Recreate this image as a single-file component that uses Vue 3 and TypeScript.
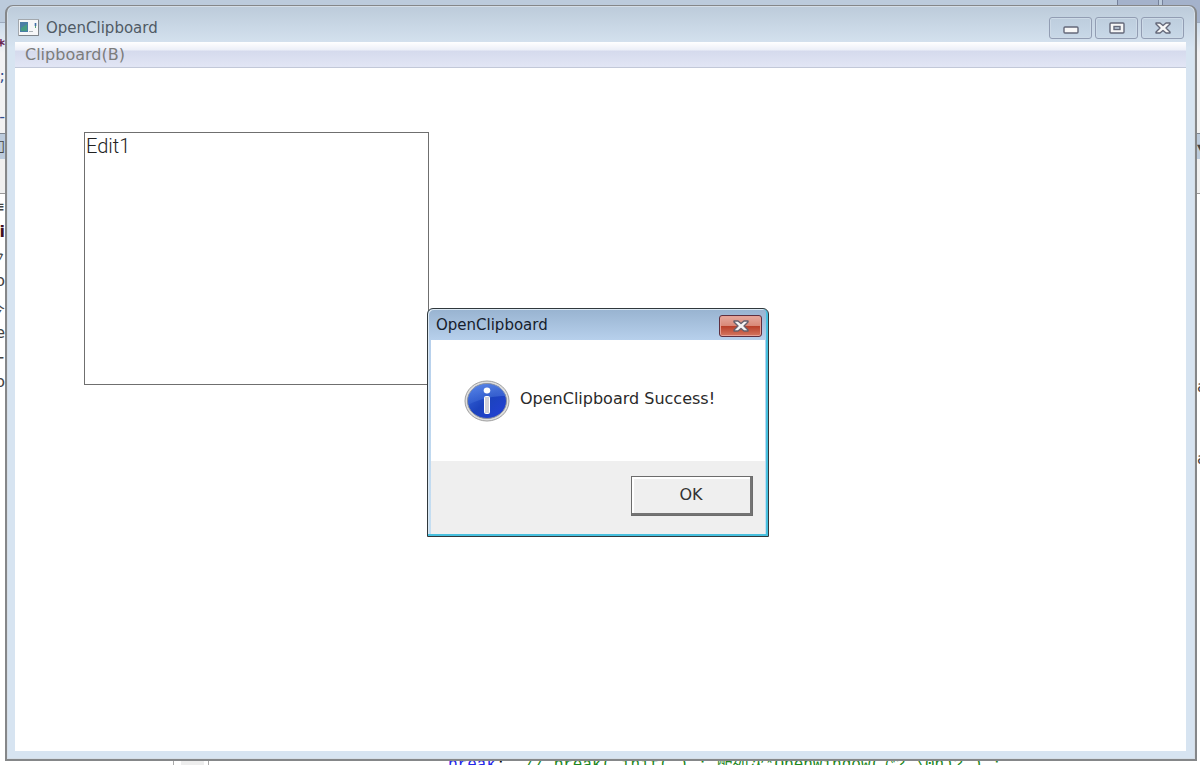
<script setup lang="ts">
import { ref } from 'vue'

interface Fragment {
  text: string
  top: number
  tone: string
}

const editText = ref('Edit1')
const dialogOpen = ref(true)

const leftFragments: Fragment[] = [
  { text: '*', top: 36, tone: 'plum' },
  { text: ';', top: 66, tone: 'navy' },
  { text: '-', top: 107, tone: 'navy' },
  { text: '□', top: 136, tone: 'ink' },
  { text: '≡', top: 197, tone: 'ink' },
  { text: 'i', top: 222, tone: 'maroon' },
  { text: 'フ', top: 249, tone: 'ink' },
  { text: 'o', top: 271, tone: 'ink' },
  { text: '今', top: 299, tone: 'ink' },
  { text: 'e', top: 323, tone: 'ink' },
  { text: '−', top: 348, tone: 'ink' },
  { text: 'o', top: 372, tone: 'ink' },
]

const rightFragments: Fragment[] = [
  { text: '▾', top: 138, tone: 'ink' },
  { text: 'a', top: 377, tone: 'ink' },
  { text: 'a', top: 449, tone: 'ink' },
]
</script>

<template>
  <div class="desktop">
    <div class="backdrop" aria-hidden="true">
      <div class="back-title"><span class="back-tab first"></span><span class="back-tab"></span></div>
      <div class="back-tools"></div>
      <div class="back-band"></div>
      <div class="back-head"></div>
      <div class="edge left">
        <span v-for="f in leftFragments" :key="f.top" :class="f.tone" :style="{ top: f.top + 'px' }">{{ f.text }}</span>
      </div>
      <div class="edge right">
        <span v-for="f in rightFragments" :key="f.top" :class="f.tone" :style="{ top: f.top + 'px' }">{{ f.text }}</span>
      </div>
      <div class="code-row">
        <span class="gutter"></span>
        <code><b>break</b>;&nbsp; <i>// break( init( ) ; 配列次*OpenWindow(で? \0n)? ) ;</i></code>
      </div>
    </div>

    <main class="window">
      <header class="titlebar">
        <svg class="app-icon" width="21" height="17" viewBox="0 0 21 17">
          <rect x="0.5" y="0.5" width="20" height="16" fill="#f6f7f8" stroke="#a3a8ad" />
          <path d="M1 16.5H20.5V1" fill="none" stroke="#7e848a" />
          <rect x="2" y="3" width="8" height="10" fill="#4a7ea6" />
          <path d="M3 9L9 5V12H3Z" fill="#459b82" />
          <rect x="11" y="12" width="4" height="1" fill="#a9b0b5" />
          <path d="M17.5 4V7" stroke="#3f6da5" stroke-width="1.6" />
          <path d="M17.5 7V9" stroke="#56a878" />
        </svg>
        <h1>OpenClipboard</h1>
        <div class="controls">
          <button type="button" aria-label="Minimize">
            <svg width="16" height="12" viewBox="0 0 16 12"><rect x="1" y="5" width="14" height="6" rx="1" fill="#f7f7f7" stroke="#646879" stroke-width="1.4" /></svg>
          </button>
          <button type="button" aria-label="Maximize">
            <svg width="16" height="12" viewBox="0 0 16 12"><rect x="1" y="1" width="14" height="10" rx="1" fill="#f7f7f7" stroke="#646879" stroke-width="1.4" /><rect x="5" y="4.5" width="6" height="3" fill="#b9c8da" stroke="#646879" stroke-width="1.4" /></svg>
          </button>
          <button type="button" aria-label="Close">
            <svg width="16" height="12" viewBox="0 0 16 12"><path d="M1 1H5L8 3.5L11 1H15V2L11 6L15 10V11H11L8 8.5L5 11H1V10L5 6L1 2Z" fill="#f7f7f7" stroke="#646879" stroke-width="1.4" stroke-linejoin="round" /></svg>
          </button>
        </div>
      </header>
      <nav class="menubar"><button type="button">Clipboard(B)</button></nav>
      <section class="client">
        <textarea v-model="editText" aria-label="Edit1" spellcheck="false"></textarea>
      </section>
    </main>

    <div v-if="dialogOpen" class="dialog" role="dialog" aria-labelledby="dialog-title">
      <header class="dialog-title">
        <h2 id="dialog-title">OpenClipboard</h2>
        <button type="button" class="dialog-close" aria-label="Close dialog" @click="dialogOpen = false">
          <svg width="16" height="12" viewBox="0 0 16 12"><path d="M1 1H5L8 3.5L11 1H15V2L11 6L15 10V11H11L8 8.5L5 11H1V10L5 6L1 2Z" fill="#f5f5f5" stroke="#65606c" stroke-width="1.4" stroke-linejoin="round" /></svg>
        </button>
      </header>
      <div class="message">
        <svg width="46" height="42" viewBox="0 0 46 42">
          <defs>
            <linearGradient id="info-blue" x1="0" y1="0" x2="1" y2="1">
              <stop offset="0" stop-color="#3d6ee0" />
              <stop offset="0.5" stop-color="#1c43bd" />
              <stop offset="1" stop-color="#2440d8" />
            </linearGradient>
            <linearGradient id="info-shine" x1="0" y1="0" x2="0" y2="1">
              <stop offset="0" stop-color="#6f9af0" stop-opacity="0.6" />
              <stop offset="1" stop-color="#4674dc" stop-opacity="0.3" />
            </linearGradient>
          </defs>
          <ellipse cx="23" cy="21" rx="22" ry="20" fill="#dedede" stroke="#a0a0a0" />
          <ellipse cx="23" cy="21" rx="19.5" ry="17.5" fill="url(#info-blue)" stroke="#8e939e" />
          <path d="M4 23C3 11 12 4 23 4C33 4 40 9 42 16C30 16 17 18 4 25Z" fill="url(#info-shine)" />
          <ellipse cx="23" cy="10.5" rx="3.3" ry="3" fill="#fff" />
          <rect x="20.5" y="16.5" width="5" height="17" rx="1" fill="#d2d2d8" stroke="#fff" />
        </svg>
        <p>OpenClipboard Success!</p>
      </div>
      <footer class="actions"><button type="button" class="ok" @click="dialogOpen = false">OK</button></footer>
    </div>
  </div>
</template>

<style>
html,
body {
  margin: 0;
  overflow: hidden;
}
</style>

<style scoped>
.desktop {
  position: relative;
  box-sizing: border-box;
  height: 100vh;
  padding: 5px 3px 4px 5px;
  background: #fff;
  font-family: "DejaVu Sans", Verdana, sans-serif;
  overflow: hidden;
}

h1,
h2,
p {
  margin: 0;
  font-weight: 400;
}

button {
  margin: 0;
  padding: 0;
  font-family: inherit;
}

svg {
  display: block;
}

.backdrop {
  position: absolute;
  inset: 0;
  overflow: hidden;
}

.back-title {
  display: flex;
  justify-content: flex-end;
  gap: 3px;
  height: 22px;
  background: #bccbdc;
  border-bottom: 1px solid #9daabd;
}

.back-tab {
  width: 37px;
  height: 22px;
  background: #a4b2cb;
  border-left: 1px solid #75819a;
}

.back-tab.first {
  width: 40px;
  border-right: 1px solid #75819a;
}

.back-tools {
  height: 110px;
  background: linear-gradient(#ccdcec 0, #f2f2f4 30px, #f2f2f2 100%);
}

.back-band {
  height: 26px;
  background: #bccbdc;
  border-top: 1px solid #7f8791;
  box-sizing: border-box;
}

.back-head {
  height: 34px;
  background: #f0f0f0;
  border-bottom: 1px solid #999;
}

.edge {
  position: absolute;
  top: 0;
  bottom: 0;
  width: 5px;
  overflow: hidden;
  font-size: 16px;
  line-height: 20px;
}

.edge.left {
  left: 0;
}

.edge.right {
  right: 0;
  width: 3px;
}

.edge span {
  position: absolute;
}

.edge.left span {
  right: 0;
}

.edge.right span {
  left: 0;
}

.ink {
  color: #444;
}

.navy {
  color: #34508f;
}

.plum {
  color: #6b2551;
  font-weight: 700;
}

.maroon {
  color: #401020;
  font-weight: 700;
}

.code-row {
  position: absolute;
  inset: auto 0 0 0;
  display: flex;
  height: 4px;
  overflow: hidden;
  padding-left: 173px;
}

.gutter {
  box-sizing: border-box;
  width: 36px;
  margin-right: 239px;
  background: linear-gradient(90deg, #fff 7px, #eee 7px 30px, #fff 30px);
  border: solid #aaa;
  border-width: 0 1px;
}

code {
  margin-top: -6px;
  font-family: "Liberation Mono", "Noto Sans CJK JP", monospace;
  font-size: 16px;
  line-height: 20px;
  white-space: nowrap;
}

code b {
  color: #2525e8;
  font-weight: 400;
}

code i {
  color: #218721;
  font-style: normal;
}

.window {
  position: relative;
  display: flex;
  flex-direction: column;
  box-sizing: border-box;
  height: 100%;
  padding: 0 9px 8px 8px;
  background: linear-gradient(#bccbda 0, #d7e4f1 42px, #d7e4f1 100%);
  border: 2px solid #858789;
  border-top-width: 1px;
  border-radius: 8px 8px 0 0;
  box-shadow: inset 0 0 0 1px #d5dee7;
}

.titlebar {
  display: flex;
  align-items: center;
  height: 36px;
  padding: 0 2px 0 3px;
}

.titlebar h1 {
  flex: 1;
  margin: 8px 0 0 7px;
  color: #505a64;
  font-size: 15px;
  line-height: 20px;
}

.app-icon {
  margin-top: 6px;
}

.controls {
  display: flex;
  gap: 3px;
  margin-top: 8px;
}

.controls button {
  display: grid;
  place-items: center;
  width: 43px;
  height: 22px;
  background: linear-gradient(#bdcddd, #c8d8e7);
  border: 1px solid #929db3;
  border-radius: 3px;
  box-shadow: inset 0 0 0 1px #cddae7;
}

.menubar {
  box-sizing: border-box;
  height: 26px;
  padding-left: 10px;
  background: linear-gradient(#fff 0, #eceff8 8px, #d5daed 9px, #e1e5f4 24px);
  border-bottom: 1px solid #c2c8d8;
}

.menubar button {
  background: none;
  border: 0;
  color: #7c7c7c;
  font-size: 16px;
  line-height: 25px;
}

.client {
  flex: 1;
  padding: 64px 69px;
  background: #fff;
}

textarea {
  display: block;
  box-sizing: border-box;
  width: 345px;
  height: 253px;
  padding: 0 1px;
  background: #fff;
  border: 1px solid #6f6f6f;
  border-radius: 0;
  color: #222;
  font-family: Roboto, "Liberation Sans", sans-serif;
  font-size: 20px;
  font-weight: 300;
  line-height: 26px;
  outline: 0;
  resize: none;
}

.dialog {
  position: absolute;
  top: 308px;
  left: 427px;
  box-sizing: border-box;
  width: 342px;
  padding: 0 3px 2px;
  background: linear-gradient(#98b3d0 0, #b7d0ec 31px, #c6dff2 100%);
  border: 1px solid #30383c;
  border-radius: 6px 6px 0 0;
  box-shadow: inset -1px -1px 0 1px #48c0de, inset 1px 1px 0 #dce9f4;
}

.dialog-title {
  display: flex;
  align-items: center;
  justify-content: space-between;
  height: 31px;
  padding: 0 3px 0 5px;
}

.dialog-title h2 {
  color: #16202c;
  font-size: 15px;
  line-height: 20px;
}

.dialog-close {
  display: grid;
  place-items: center;
  width: 43px;
  height: 22px;
  margin-top: 2px;
  background: linear-gradient(#e6a99e 0, #d98978 48%, #b9402a 52%, #d47761 100%);
  border: 1px solid #5f3040;
  border-radius: 3px;
  box-shadow: inset 0 0 0 1px #e6a095;
}

.message {
  display: flex;
  align-items: center;
  gap: 10px;
  box-sizing: border-box;
  height: 121px;
  padding-left: 33px;
  background: #fff;
}

.message p {
  margin-bottom: 4px;
  color: #2a2a2a;
  font-size: 16px;
  line-height: 24px;
}

.actions {
  display: flex;
  justify-content: flex-end;
  padding: 15px 12px 18px;
  background: #efefef;
}

.ok {
  width: 122px;
  height: 40px;
  padding: 0 2px 3px 0;
  background: #efefef;
  border: 1px solid #6c6c6c;
  border-radius: 0;
  box-shadow: inset -2px -2px 0 #747474, inset 2px 2px 0 #fff;
  color: #333;
  font-size: 16px;
}
</style>
